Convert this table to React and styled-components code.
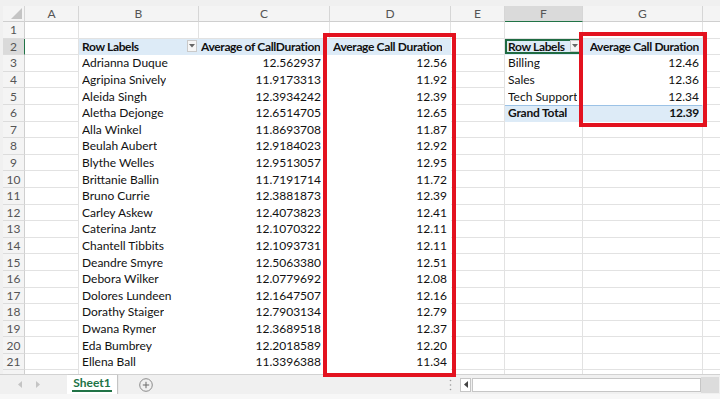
import React from 'react';
import styled, { createGlobalStyle, css } from 'styled-components';

const Global = createGlobalStyle`
  html, body { margin: 0; padding: 0; background: #f0f0f0; }
  body { font-family: Lato, "Liberation Sans", sans-serif; }
`;

const COLS = [22, 54, 120, 131, 121, 54, 78, 120, 60];
const LETTERS = ['A', 'B', 'C', 'D', 'E', 'F', 'G', 'H'];
const ROW_H = 16.6;
const GREEN = '#217346';
const RED = '#e3121f';

const names = [
  ['Adrianna Duque', '12.562937', '12.56'],
  ['Agripina Snively', '11.9173313', '11.92'],
  ['Aleida Singh', '12.3934242', '12.39'],
  ['Aletha Dejonge', '12.6514705', '12.65'],
  ['Alla Winkel', '11.8693708', '11.87'],
  ['Beulah Aubert', '12.9184023', '12.92'],
  ['Blythe Welles', '12.9513057', '12.95'],
  ['Brittanie Ballin', '11.7191714', '11.72'],
  ['Bruno Currie', '12.3881873', '12.39'],
  ['Carley Askew', '12.4073823', '12.41'],
  ['Caterina Jantz', '12.1070322', '12.11'],
  ['Chantell Tibbits', '12.1093731', '12.11'],
  ['Deandre Smyre', '12.5063380', '12.51'],
  ['Debora Wilker', '12.0779692', '12.08'],
  ['Dolores Lundeen', '12.1647507', '12.16'],
  ['Dorathy Staiger', '12.7903134', '12.79'],
  ['Dwana Rymer', '12.3689518', '12.37'],
  ['Eda Bumbrey', '12.2018589', '12.20'],
  ['Ellena Ball', '11.3396388', '11.34'],
  ['Christi Lundell', '12.1171035', '12.12'],
];

const depts = [
  ['Billing', '12.46'],
  ['Sales', '12.36'],
  ['Tech Support', '12.34'],
];

const Page = styled.div`
  position: relative;
  width: 720px;
  height: 399px;
  overflow: hidden;
  background: #f0f0f0;
  display: flex;
  flex-direction: column;
`;

const SheetArea = styled.div`
  height: 368px;
  margin-top: 6px;
  margin-left: 3px;
  overflow: hidden;
  background: #fff;
`;

const Grid = styled.div`
  display: grid;
  grid-template-columns: ${COLS.map((c) => `${c}px`).join(' ')};
  grid-template-rows: 16px;
  grid-auto-rows: ${ROW_H}px;
  font-family: Lato, "Liberation Sans", sans-serif;
  font-size: 12px;
  color: #111;
`;

const ColHead = styled.div`
  box-sizing: border-box;
  background: ${(p) => (p.$active ? '#dadada' : '#f4f4f4')};
  border-right: 1px solid #d6d6d6;
  border-bottom: 1px solid ${(p) => (p.$active ? GREEN : '#cfcfcf')};
  color: #555;
  font-size: 12px;
  display: flex;
  align-items: center;
  justify-content: center;
`;

const Corner = styled(ColHead)`
  justify-content: flex-end;
  align-items: flex-end;
  padding: 0 2px 2px 0;
`;

const RowHead = styled.div`
  box-sizing: border-box;
  background: ${(p) => (p.$active ? '#dadada' : '#f4f4f4')};
  border-right: 1px solid ${(p) => (p.$active ? GREEN : '#cfcfcf')};
  border-bottom: 1px solid #dcdcdc;
  color: #555;
  font-size: 12px;
  display: flex;
  align-items: center;
  justify-content: center;
`;

const kinds = {
  grid: css`
    background: #fff;
    border-right: 1px solid #e2e2e2;
    border-bottom: 1px solid #e2e2e2;
  `,
  pivot: css`
    background: #fff;
    border-right: 1px solid #fff;
    border-bottom: 1px solid #fff;
  `,
  head: css`
    background: #ddebf7;
    border-right: 1px solid #ddebf7;
    border-bottom: 1px solid #ddebf7;
    font-weight: 700;
    letter-spacing: -0.35px;
  `,
  total: css`
    background: #ddebf7;
    border-right: 1px solid #ddebf7;
    border-bottom: 1px solid #ddebf7;
    box-shadow: inset 0 1px 0 #9bc2e6;
    font-weight: 700;
    letter-spacing: -0.2px;
  `,
};

const Cell = styled.div`
  box-sizing: border-box;
  display: flex;
  align-items: center;
  justify-content: ${(p) => (p.$align === 'right' ? 'flex-end' : 'space-between')};
  padding: 0 ${(p) => p.$pr ?? 3}px 0 ${(p) => p.$pl ?? 3}px;
  white-space: nowrap;
  overflow: hidden;
  ${(p) => kinds[p.$kind || 'grid']}
  ${(p) => p.$active && css`box-shadow: inset 0 0 0 2px #1f6b42;`}
`;

const Txt = styled.span`
  overflow: hidden;
  flex: none;
`;

const Drop = styled.span`
  flex: none;
  box-sizing: border-box;
  width: 10px;
  height: 12px;
  margin-left: 2px;
  margin-right: -1px;
  border: 1px solid #c9c9c9;
  background: #f6f6f6;
  display: flex;
  align-items: center;
  justify-content: center;
`;

const DropArrow = () => (
  <svg width="6" height="4" viewBox="0 0 6 4"><path d="M0 0h6L3 3.5z" fill="#666" /></svg>
);

const Overlay = styled.div`
  position: absolute;
  box-sizing: border-box;
  border: 4.5px solid ${RED};
  pointer-events: none;
`;

const TabBar = styled.div`
  flex: none;
  height: 20px;
  display: flex;
  align-items: stretch;
  background: #f0f0f0;
  border-top: 1px solid #d2d2d2;
  box-sizing: border-box;
  font-family: Lato, "Liberation Sans", sans-serif;
`;

const Nav = styled.div`
  width: 67px;
  display: flex;
  align-items: center;
  padding-left: 18px;
  gap: 14px;
  box-sizing: border-box;
`;

const SheetTab = styled.div`
  width: 50px;
  background: #fff;
  display: flex;
  align-items: flex-start;
  justify-content: center;
  box-shadow: 1px 0 1px rgba(0, 0, 0, 0.18);
  box-sizing: border-box;
`;

const TabLabel = styled.span`
  color: ${GREEN};
  font-weight: 700;
  font-size: 12px;
  line-height: 15px;
  padding: 0 1px;
  border-bottom: 2px solid ${GREEN};
`;

const AddWrap = styled.div`
  width: 58px;
  display: flex;
  align-items: center;
  justify-content: center;
`;

const Spacer = styled.div`
  flex: 1;
  display: flex;
  align-items: center;
  justify-content: flex-end;
  padding-right: 8px;
`;

const Scroll = styled.div`
  width: 260px;
  display: flex;
  align-items: center;
`;

const ScrollBtn = styled.div`
  box-sizing: border-box;
  width: 11px;
  height: 14px;
  background: #fff;
  border: 1px solid #c6c6c6;
  display: flex;
  align-items: center;
  justify-content: center;
`;

const Track = styled.div`
  box-sizing: border-box;
  width: 229px;
  height: 14px;
  margin-left: 1px;
  background: #fff;
  border: 1px solid #c6c6c6;
`;

const Thumb = styled.div`
  width: 18px;
  height: 16px;
  background: #dcdcdc;
`;

const BottomStrip = styled.div`
  flex: 1;
  background: #f7f7f7;
`;

const Tri = ({ dir, color = '#c4c4c4' }) => (
  <svg width="4" height="7" viewBox="0 0 4 7">
    <path d={dir === 'left' ? 'M4 0v7L0 3.5z' : 'M0 0v7L4 3.5z'} fill={color} />
  </svg>
);

export default function App() {
  const rows = [];
  rows.push(
    <Corner key="corner">
      <svg width="11" height="11" viewBox="0 0 11 11"><path d="M11 0V11H0z" fill="#c4c4c4" /></svg>
    </Corner>
  );
  LETTERS.forEach((l) =>
    rows.push(<ColHead key={`h${l}`} $active={l === 'F'}>{l}</ColHead>)
  );

  const empty = (key, n = 1) => Array.from({ length: n }, (_, i) => <Cell key={`${key}${i}`} />);

  rows.push(<RowHead key="r1">1</RowHead>, ...empty('e1_', 8));

  rows.push(
    <RowHead key="r2" $active>2</RowHead>,
    <Cell key="2a" />,
    <Cell key="2b" $kind="head" $pr={2}>
      <Txt>Row Labels</Txt>
      <Drop><DropArrow /></Drop>
    </Cell>,
    <Cell key="2c" $kind="head" $pl={2} $pr={0}><Txt>Average of CallDuration</Txt></Cell>,
    <Cell key="2d" $kind="head"><Txt>Average Call Duration</Txt></Cell>,
    <Cell key="2e" />,
    <Cell key="2f" $kind="head" $active $pr={3}>
      <Txt>Row Labels</Txt>
      <Drop><DropArrow /></Drop>
    </Cell>,
    <Cell key="2g" $kind="head" $align="right"><Txt>Average Call Duration</Txt></Cell>,
    <Cell key="2h" />
  );

  names.forEach(([n, c, d], i) => {
    const r = i + 3;
    const dept = depts[i];
    const isTotal = i === 3;
    rows.push(
      <RowHead key={`r${r}`}>{r}</RowHead>,
      <Cell key={`${r}a`} />,
      <Cell key={`${r}b`} $kind="pivot"><Txt>{n}</Txt></Cell>,
      <Cell key={`${r}c`} $kind="pivot" $align="right" $pr={8}><Txt>{c}</Txt></Cell>,
      <Cell key={`${r}d`} $kind="pivot" $align="right"><Txt>{d}</Txt></Cell>,
      <Cell key={`${r}e`} />
    );
    if (dept) {
      rows.push(
        <Cell key={`${r}f`} $kind="pivot"><Txt>{dept[0]}</Txt></Cell>,
        <Cell key={`${r}g`} $kind="pivot" $align="right"><Txt>{dept[1]}</Txt></Cell>
      );
    } else if (isTotal) {
      rows.push(
        <Cell key={`${r}f`} $kind="total"><Txt>Grand Total</Txt></Cell>,
        <Cell key={`${r}g`} $kind="total" $align="right"><Txt>12.39</Txt></Cell>
      );
    } else {
      rows.push(<Cell key={`${r}f`} />, <Cell key={`${r}g`} />);
    }
    rows.push(<Cell key={`${r}h`} />);
  });

  return (
    <Page>
      <Global />
      <SheetArea>
        <Grid>{rows}</Grid>
      </SheetArea>
      <TabBar>
        <Nav>
          <Tri dir="left" />
          <Tri dir="right" />
        </Nav>
        <SheetTab>
          <TabLabel>Sheet1</TabLabel>
        </SheetTab>
        <AddWrap>
          <svg width="14" height="14" viewBox="0 0 14 14">
            <circle cx="7" cy="7" r="6.3" fill="none" stroke="#8a8a8a" strokeWidth="1" />
            <path d="M7 3.8v6.4M3.8 7h6.4" stroke="#6a6a6a" strokeWidth="1" />
          </svg>
        </AddWrap>
        <Spacer>
          <svg width="3" height="12" viewBox="0 0 3 12">
            <circle cx="1.5" cy="1.5" r="0.8" fill="#9a9a9a" />
            <circle cx="1.5" cy="6" r="0.8" fill="#9a9a9a" />
            <circle cx="1.5" cy="10.5" r="0.8" fill="#9a9a9a" />
          </svg>
        </Spacer>
        <Scroll>
          <ScrollBtn>
            <Tri dir="left" color="#444" />
          </ScrollBtn>
          <Track />
          <Thumb />
        </Scroll>
      </TabBar>
      <BottomStrip />
      <Overlay style={{ left: 323, top: 33, width: 133, height: 344 }} />
      <Overlay style={{ left: 579, top: 32, width: 128, height: 95 }} />
    </Page>
  );
}
